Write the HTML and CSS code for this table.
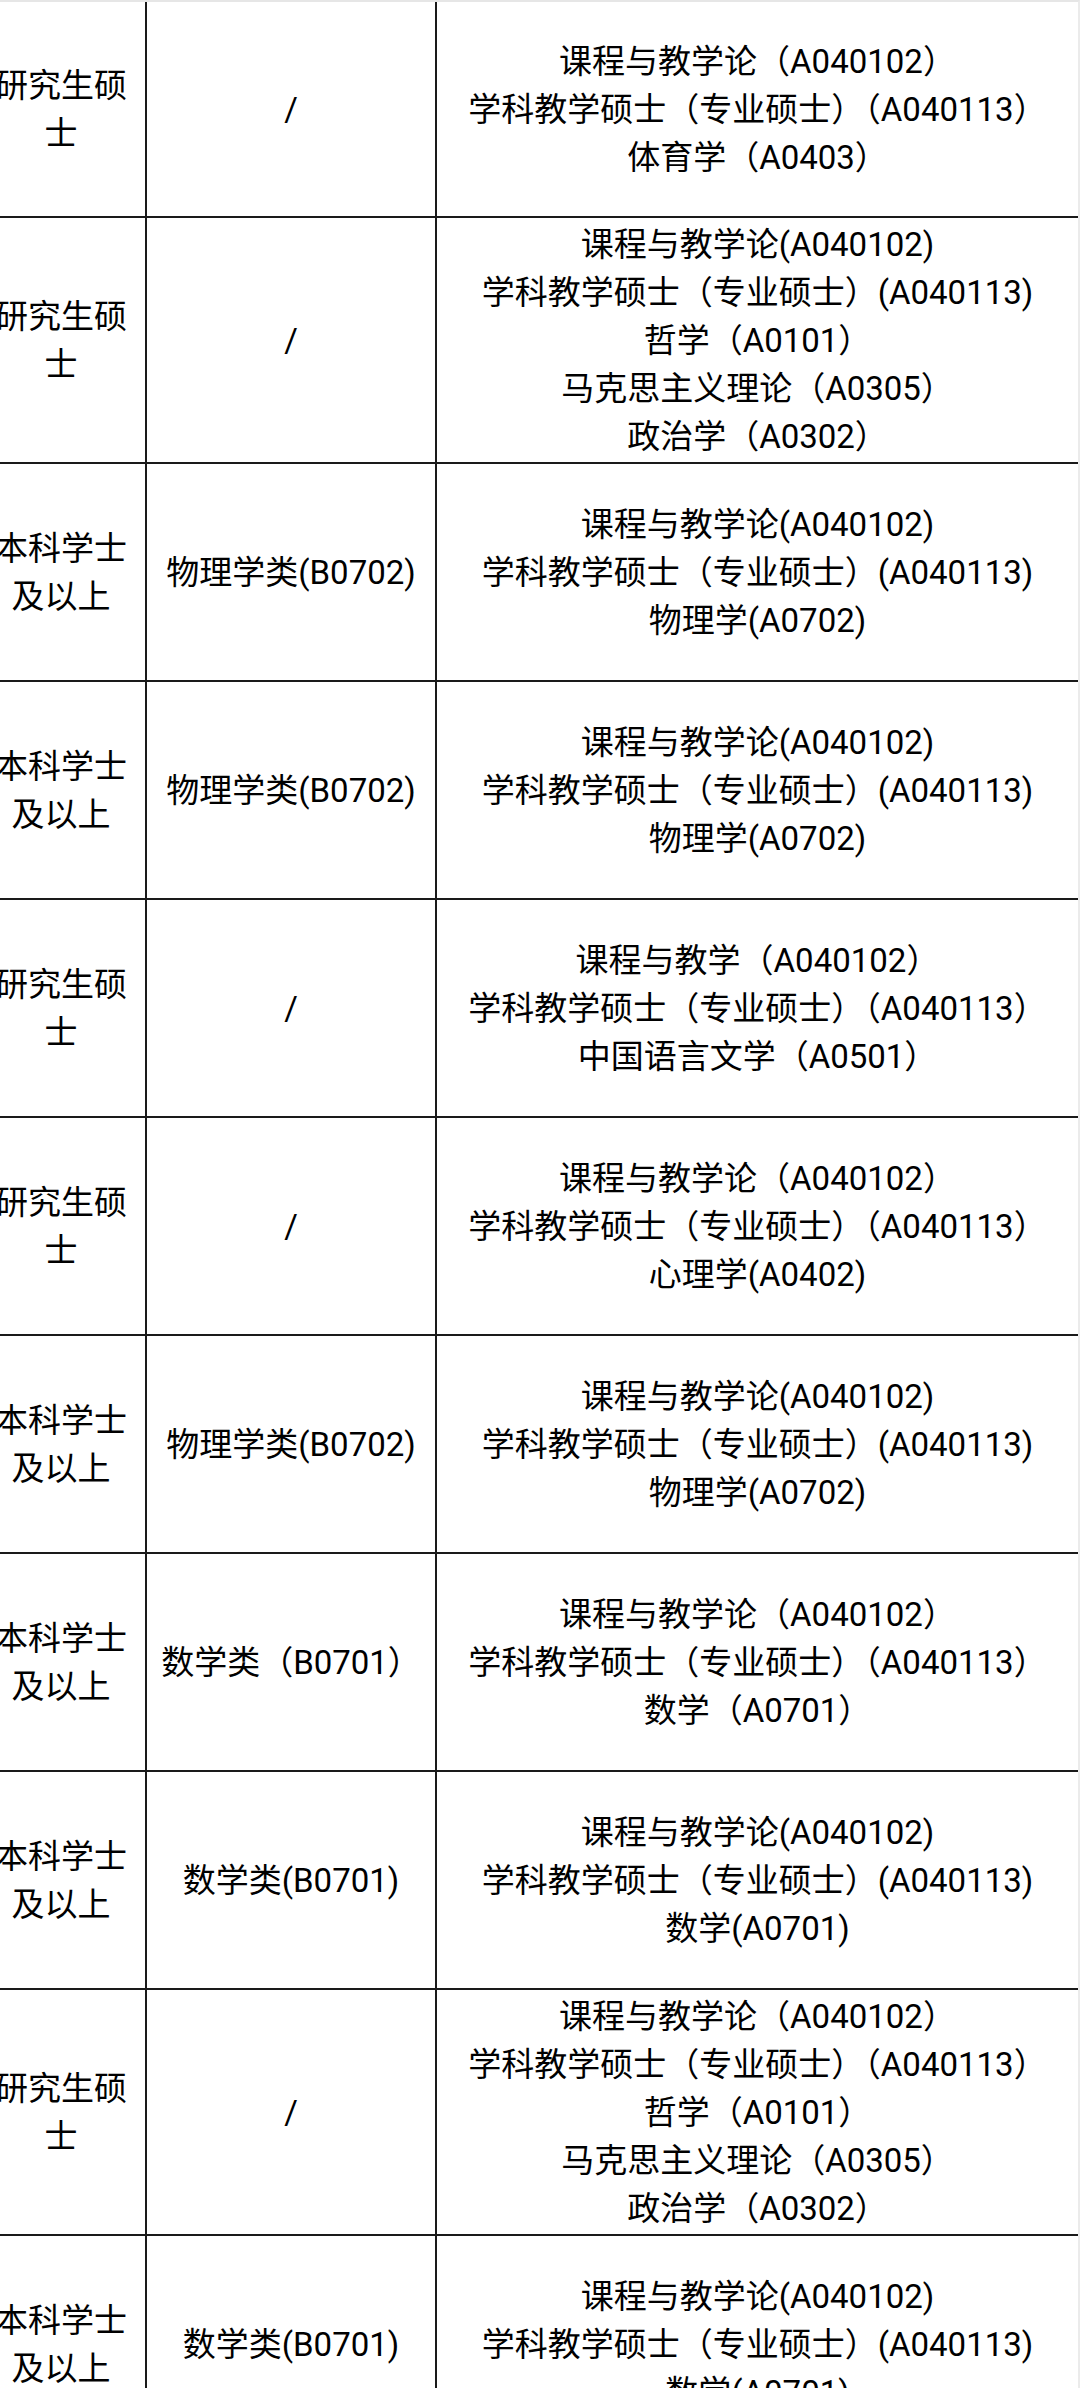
FILE: index.html
```html
<!DOCTYPE html>
<html lang="zh-CN">
<head>
<meta charset="utf-8">
<title>招聘岗位专业要求</title>
<link rel="stylesheet" href="styles.css">
</head>
<body>
<div class="page">
  <div class="table">
    <div class="row">
      <div class="cell">研究生硕士</div>
      <div class="cell">/</div>
      <div class="cell">课程与教学论（A040102）<br>学科教学硕士（专业硕士）（A040113）<br>体育学（A0403）</div>
    </div>
    <div class="row">
      <div class="cell">研究生硕士</div>
      <div class="cell">/</div>
      <div class="cell">课程与教学论(A040102)<br>学科教学硕士（专业硕士）(A040113)<br>哲学（A0101）<br>马克思主义理论（A0305）<br>政治学（A0302）</div>
    </div>
    <div class="row">
      <div class="cell">本科学士及以上</div>
      <div class="cell">物理学类(B0702)</div>
      <div class="cell">课程与教学论(A040102)<br>学科教学硕士（专业硕士）(A040113)<br>物理学(A0702)</div>
    </div>
    <div class="row">
      <div class="cell">本科学士及以上</div>
      <div class="cell">物理学类(B0702)</div>
      <div class="cell">课程与教学论(A040102)<br>学科教学硕士（专业硕士）(A040113)<br>物理学(A0702)</div>
    </div>
    <div class="row">
      <div class="cell">研究生硕士</div>
      <div class="cell">/</div>
      <div class="cell">课程与教学（A040102）<br>学科教学硕士（专业硕士）（A040113）<br>中国语言文学（A0501）</div>
    </div>
    <div class="row">
      <div class="cell">研究生硕士</div>
      <div class="cell">/</div>
      <div class="cell">课程与教学论（A040102）<br>学科教学硕士（专业硕士）（A040113）<br>心理学(A0402)</div>
    </div>
    <div class="row">
      <div class="cell">本科学士及以上</div>
      <div class="cell">物理学类(B0702)</div>
      <div class="cell">课程与教学论(A040102)<br>学科教学硕士（专业硕士）(A040113)<br>物理学(A0702)</div>
    </div>
    <div class="row">
      <div class="cell">本科学士及以上</div>
      <div class="cell">数学类（B0701）</div>
      <div class="cell">课程与教学论（A040102）<br>学科教学硕士（专业硕士）（A040113）<br>数学（A0701）</div>
    </div>
    <div class="row">
      <div class="cell">本科学士及以上</div>
      <div class="cell">数学类(B0701)</div>
      <div class="cell">课程与教学论(A040102)<br>学科教学硕士（专业硕士）(A040113)<br>数学(A0701)</div>
    </div>
    <div class="row">
      <div class="cell">研究生硕士</div>
      <div class="cell">/</div>
      <div class="cell">课程与教学论（A040102）<br>学科教学硕士（专业硕士）（A040113）<br>哲学（A0101）<br>马克思主义理论（A0305）<br>政治学（A0302）</div>
    </div>
    <div class="row">
      <div class="cell">本科学士及以上</div>
      <div class="cell">数学类(B0701)</div>
      <div class="cell">课程与教学论(A040102)<br>学科教学硕士（专业硕士）(A040113)<br>数学(A0701)</div>
    </div>
  </div>
</div>
</body>
</html>
```

FILE: styles.css
```css
html, body {
  margin: 0;
  padding: 0;
  background: #ffffff;
}

.page {
  width: 1080px;
  height: 2388px;
  box-sizing: border-box;
  overflow: hidden;
  border-top: 2px solid #e6e6e6;
  border-right: 2px solid #ebebeb;
  font-family: Roboto, "Noto Sans CJK SC", sans-serif;
  font-size: 33px;
  line-height: 48px;
  color: #000000;
}

.table {
  margin-left: -23px;
  width: 1101px;
}

.row {
  display: grid;
  grid-template-columns: 170px 290px 1fr;
  min-height: 218px;
  box-sizing: border-box;
  border-bottom: 2px solid #1a1a1a;
}

.row:first-child {
  min-height: 216px;
}

.cell {
  display: flex;
  flex-direction: column;
  justify-content: center;
  align-items: center;
  text-align: center;
  padding: 3px 8px 1px;
  border-right: 2px solid #1a1a1a;
  white-space: normal;
}

.cell:last-child {
  border-right: none;
  white-space: nowrap;
  display: block;
  align-self: center;
}
```
